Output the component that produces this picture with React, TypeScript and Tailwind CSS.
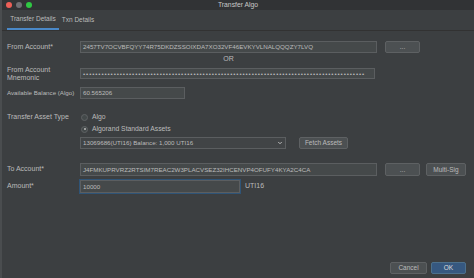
import { ChevronDown } from 'lucide-react'

const FONT = { fontFamily: '"Liberation Sans", Arial, sans-serif' }

function Field({ children, className = '' }: { children?: React.ReactNode; className?: string }) {
  return (
    <div className={`h-full flex items-center px-[2px] bg-[#45494a] border border-[#5b5e60] text-[#bbbbbb] text-[6.2px] whitespace-nowrap overflow-hidden ${className}`}>
      {children}
    </div>
  )
}

function Btn({ label, className = '' }: { label: string; className?: string }) {
  return (
    <div className={`h-full flex items-center justify-center rounded-[2px] bg-[#4c5052] border border-[#5e6163] text-[#bbbbbb] text-[6.5px] ${className}`}>
      {label}
    </div>
  )
}

function Radio({ checked, label }: { checked?: boolean; label: string }) {
  return (
    <div className="flex items-center gap-[4px] pl-[1px]">
      <div className="w-[7px] h-[7px] rounded-full bg-[#43494a] border border-[#5f6264] flex items-center justify-center">
        {checked && <div className="w-[2px] h-[2px] rounded-full bg-[#bbbbbb]" />}
      </div>
      <span className="text-[6.8px] text-[#bbbbbb]">{label}</span>
    </div>
  )
}

export default function App() {
  return (
    <div style={FONT} className="w-[474px] h-[278px] bg-[#3c3f41] flex flex-col overflow-hidden border-l-2 border-[#4a4d4f]">
      {/* title bar */}
      <div className="h-[10px] bg-[#313335] relative flex items-center shrink-0">
        <div className="flex items-center gap-[4px] pl-[4px]">
          <div className="w-[6px] h-[6px] rounded-full bg-[#ec5f57]" />
          <div className="w-[6px] h-[6px] rounded-full bg-[#6f6f74]" />
          <div className="w-[6px] h-[6px] rounded-full bg-[#2fc843]" />
        </div>
        <span className="absolute left-0 right-0 text-center text-[6.8px] text-[#c8c8c8]">Transfer Algo</span>
      </div>

      {/* tabs */}
      <div className="h-[21px] flex items-stretch border-b border-[#323232] shrink-0 pl-[5px]">
        <div className="w-[52px] flex items-center justify-center border-b-2 border-[#4a88c7] text-[6.5px] text-[#bbbbbb]">Transfer Details</div>
        <div className="w-[38px] flex items-center justify-center text-[6.5px] text-[#bbbbbb]">Txn Details</div>
      </div>

      <div className="flex-1 flex flex-col pl-[5px] pr-[8px] text-[7px] text-[#bbbbbb] whitespace-nowrap">
        <div className="mt-[10px] h-[12px] flex items-center">
          <span className="w-[73px] shrink-0">From Account*</span>
          <Field className="w-[297px]">2457TV7OCVBFQYY74R75DKDZSSOIXDA7XO32VF46EVKYVLNALQQQZY7LVQ</Field>
          <Btn label="..." className="ml-[8px] w-[35px]" />
        </div>

        <div className="h-[13px] flex items-center">
          <span className="w-[297px] ml-[73px] text-center">OR</span>
        </div>

        <div className="h-[15px] flex items-center">
          <span className="w-[73px] shrink-0 leading-[7.5px]">From Account<br />Mnemonic</span>
          <div className="h-[11px]">
            <Field className="w-[295px] text-[5px] tracking-[0.9px]">{'•'.repeat(92)}</Field>
          </div>
        </div>

        <div className="mt-[6px] h-[12px] flex items-center">
          <span className="w-[73px] shrink-0 text-[6.2px]">Available Balance (Algo)</span>
          <Field className="w-[105px]">60.565206</Field>
        </div>

        <div className="mt-[12px] h-[12px] flex items-center">
          <span className="w-[73px] shrink-0">Transfer Asset Type</span>
          <Radio label="Algo" />
        </div>
        <div className="h-[12px] flex items-center">
          <span className="w-[73px] shrink-0" />
          <Radio checked label="Algorand Standard Assets" />
        </div>

        <div className="mt-[2px] h-[12px] flex items-center">
          <span className="w-[73px] shrink-0" />
          <Field className="w-[206px] justify-between bg-[#414446]">
            <span>13069686(UTI16) Balance: 1,000 UTI16</span>
            <ChevronDown className="w-[6px] h-[6px] text-[#bbbbbb]" strokeWidth={4} />
          </Field>
          <Btn label="Fetch Assets" className="ml-[13px] w-[49px]" />
        </div>

        <div className="mt-[14px] h-[13px] flex items-center">
          <span className="w-[73px] shrink-0">To Account*</span>
          <Field className="w-[297px]">J4FMKUPRVRZ2RTSIM7REAC2W3PLACVSEZ32IHCENVP4OFUFY4KYA2C4CA</Field>
          <Btn label="..." className="ml-[8px] w-[35px]" />
          <Btn label="Multi-Sig" className="ml-[6px] w-[40px]" />
        </div>

        <div className="mt-[4px] h-[13px] flex items-center">
          <span className="w-[73px] shrink-0">Amount*</span>
          <Field className="w-[160px] border-[#3d6a95] ring-1 ring-[#2f5477]">10000</Field>
          <span className="ml-[5px]">UTI16</span>
        </div>

        <div className="flex-1" />

        <div className="h-[12px] mb-[4px] flex justify-end gap-[4px]">
          <Btn label="Cancel" className="w-[37px]" />
          <div className="w-[35px] h-full flex items-center justify-center rounded-[2px] bg-[#365880] border border-[#4c708c] text-[#dddddd] text-[6.5px]">OK</div>
        </div>
      </div>
    </div>
  )
}
